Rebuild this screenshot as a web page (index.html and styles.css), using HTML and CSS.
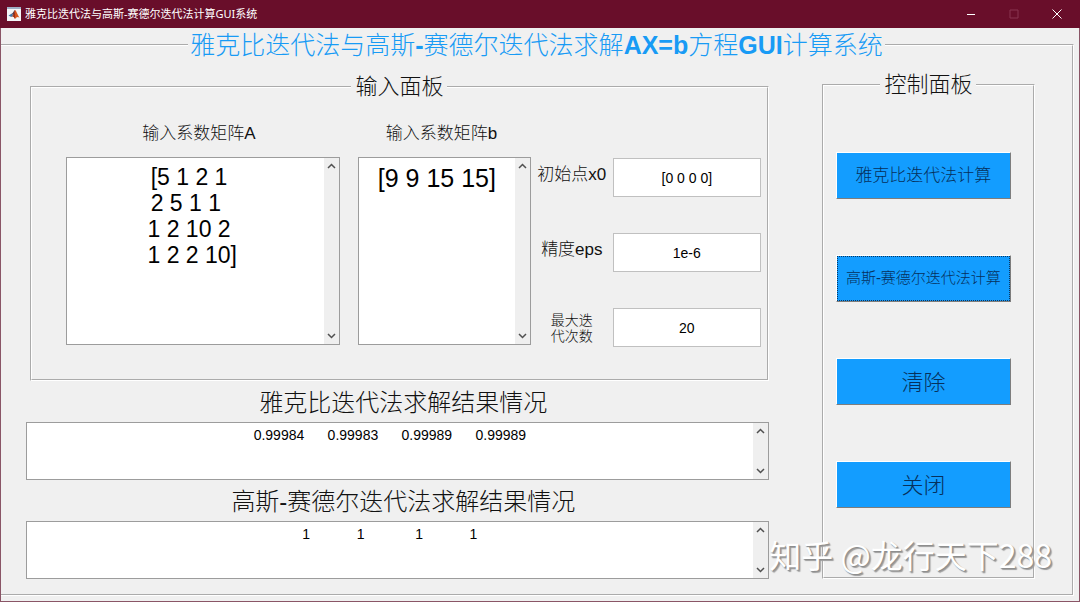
FILE: index.html
```html
<!DOCTYPE html>
<html lang="zh-CN">
<head>
<meta charset="utf-8">
<meta name="viewport" content="width=device-width, initial-scale=1">
<title>雅克比迭代法与高斯-赛德尔迭代法计算GUI系统</title>
<link rel="stylesheet" href="styles.css">
</head>
<body>
<svg class="defs" aria-hidden="true">
  <symbol id="up" viewBox="0 0 9 6"><path d="M1 5 4.500 1.500 8 5" fill="none" stroke="#505050" stroke-width="1.500"/></symbol>
  <symbol id="down" viewBox="0 0 9 6"><path d="M1 1 4.500 4.500 8 1" fill="none" stroke="#505050" stroke-width="1.500"/></symbol>
</svg>
<header class="titlebar">
  <svg class="app-icon" viewBox="0 0 14 14" aria-hidden="true">
    <rect width="14" height="14" fill="#f4f6f8"/>
    <rect width="14" height="2" fill="#9fb0c6"/>
    <path d="M1.500 8.500 4.500 6.800 6 7.700 4.200 10z" fill="#3f78ab"/>
    <path d="M4.500 6.800C6 6.500 6.800 3.500 8 3L7.500 7 5.600 9.500 4.200 10 6 7.700z" fill="#5a3a4a"/>
    <path d="M8 3C9.200 3.200 10.500 8 12.500 10.500 10.500 9.300 9.500 10 8 12 7.500 10.200 6.500 9.300 5.600 9.500 7 8 7.300 5 8 3z" fill="#d8571f"/>
    <path d="M8 3C7.900 6 8.200 9 8 12 7.500 10.200 6.500 9.300 5.600 9.500 7 8 7.300 5 8 3z" fill="#a03018"/>
  </svg>
  <h1 class="caption">雅克比迭代法与高斯-赛德尔迭代法计算GUI系统</h1>
  <div class="window-buttons">
    <button class="win-btn" type="button" aria-label="最小化"><svg viewBox="0 0 10 10"><path d="M1 5.500H9"/></svg></button>
    <button class="win-btn win-off" type="button" aria-label="最大化" disabled><svg viewBox="0 0 10 10"><path d="M1 1H9V9H1z"/></svg></button>
    <button class="win-btn" type="button" aria-label="关闭窗口"><svg viewBox="0 0 10 10"><path d="M.5.5 9.500 9.500M9.500.5.5 9.500"/></svg></button>
  </div>
</header>
<main class="client">
  <fieldset class="frame system">
    <legend class="system-title">雅克比迭代法与高斯<b>-</b>赛德尔迭代法求解<b>AX=b</b>方程<b>GUI</b>计算系统</legend>
    <div class="columns">
      <div class="left">
        <fieldset class="frame input-panel">
          <legend class="panel-title">输入面板</legend>
          <div class="inputs">
            <div class="matrix matrix-a">
              <label class="matrix-label" for="ma">输入系数矩阵A</label>
              <div class="listbox tall">
                <textarea class="text text-a" id="ma" wrap="off">[5 1 2 1  
2 5 1 1   
1 2 10 2  
1 2 2 10] </textarea>
                <div class="scroll"><svg class="arrow"><use href="#up"/></svg><svg class="arrow"><use href="#down"/></svg></div>
              </div>
            </div>
            <div class="matrix matrix-b">
              <label class="matrix-label" for="mb">输入系数矩阵b</label>
              <div class="listbox tall">
                <textarea class="text text-b" id="mb" wrap="off">[9 9 15 15]</textarea>
                <div class="scroll"><svg class="arrow"><use href="#up"/></svg><svg class="arrow"><use href="#down"/></svg></div>
              </div>
            </div>
            <div class="params">
              <label class="param-label" for="x0">初始点x0</label>
              <input class="param-input" id="x0" value="[0 0 0 0]">
              <label class="param-label" for="eps">精度eps</label>
              <input class="param-input" id="eps" value="1e-6">
              <label class="param-label small" for="max">最大迭<br>代次数</label>
              <input class="param-input" id="max" value="20">
            </div>
          </div>
        </fieldset>
        <label class="result-label" for="r1">雅克比迭代法求解结果情况</label>
        <div class="listbox short">
          <textarea class="text text-r" id="r1" wrap="off" readonly>0.99984      0.99983      0.99989      0.99989</textarea>
          <div class="scroll"><svg class="arrow"><use href="#up"/></svg><svg class="arrow"><use href="#down"/></svg></div>
        </div>
        <label class="result-label" for="r2">高斯-赛德尔迭代法求解结果情况</label>
        <div class="listbox short">
          <textarea class="text text-r" id="r2" wrap="off" readonly>1            1             1            1</textarea>
          <div class="scroll"><svg class="arrow"><use href="#up"/></svg><svg class="arrow"><use href="#down"/></svg></div>
        </div>
      </div>
      <fieldset class="frame control-panel">
        <legend class="panel-title">控制面板</legend>
        <div class="actions">
          <button class="action mid" type="button">雅克比迭代法计算</button>
          <button class="action compact focused" type="button">高斯-赛德尔迭代法计算</button>
          <button class="action" type="button">清除</button>
          <button class="action" type="button">关闭</button>
        </div>
      </fieldset>
    </div>
  </fieldset>
  <div class="watermark">知乎 @龙行天下288</div>
</main>
</body>
</html>
```
FILE: styles.css
```css
* { box-sizing: border-box; }

body {
  margin: 0;
  min-height: 100vh;
  display: flex;
  flex-direction: column;
  background: #f0f0f0;
  color: #111;
  font-family: "Liberation Sans", "Noto Sans CJK SC", sans-serif;
  font-weight: 300;
}

button, input, textarea { font: inherit; color: inherit; }

.defs { position: absolute; width: 0; height: 0; }

.titlebar {
  display: flex;
  align-items: center;
  height: 28px;
  padding: 0 2px 0 7px;
  gap: 4px;
  background: #690e2a;
  color: #fff;
}
.app-icon { width: 14px; height: 14px; }
.caption {
  flex: 1;
  margin: 0;
  font: 400 11px/16px "Noto Sans", "Noto Sans CJK SC", sans-serif;
}
.window-buttons { display: flex; }
.win-btn {
  width: 43px;
  height: 27px;
  padding: 0;
  border: 0;
  background: none;
  display: grid;
  place-items: center;
}
.win-btn svg { width: 10px; height: 10px; fill: none; stroke: #fff; stroke-width: 1; }
.win-off svg { stroke: #8a3450; }

.client {
  position: relative;
  flex: 1;
  display: flex;
  border: 1px solid #8a5566;
  border-top: 0;
  padding: 2px 5px 5px 0;
}

.frame { margin: 0; padding: 0; min-width: 0; border: 2px groove #fff; }

.system { flex: 1; border-left: 0; }
.system-title {
  margin: 0 auto;
  padding: 0 2px;
  font-size: 25px;
  line-height: 30px;
  color: #189bf5;
}
.system-title b { font-weight: 700; }
.panel-title {
  margin: 0 auto;
  padding: 0 4px;
  font-size: 22px;
  line-height: 24px;
}

.columns {
  display: grid;
  grid-template-columns: minmax(0, 742fr) minmax(0, 213fr);
  gap: 53px;
  padding: 13px 37px 13px 25px;
}

.left { display: flex; flex-direction: column; padding-top: 2px; }
.input-panel { margin-left: 4px; }
.inputs { display: flex; padding: 25px 6px 32px 34px; }
.matrix { display: flex; flex-direction: column; gap: 13px; min-width: 0; }
.matrix-a { flex: 274; margin-right: 18px; }
.matrix-b { flex: 173; }
.matrix-label { font-size: 17px; line-height: 20px; text-align: center; }
.matrix-a .matrix-label { padding-right: 8px; }
.matrix-b .matrix-label { padding-right: 6px; }

.listbox { display: flex; border: 1px solid #9c9c9c; background: #fff; }
.tall { height: 188px; }
.short { height: 58px; }
.text {
  flex: 1;
  min-width: 0;
  margin: 0;
  border: 0;
  outline: 0;
  resize: none;
  overflow: hidden;
  background: none;
  color: #000;
  text-align: center;
  white-space: pre;
}
.text-a { padding: 6px 0; font-size: 23px; line-height: 26px; }
.text-b { padding: 6px 0; font-size: 25px; line-height: 28px; }
.text-r { padding: 4px 0; font-size: 14px; line-height: 16px; }
.scroll {
  width: 15px;
  display: flex;
  flex-direction: column;
  justify-content: space-between;
  align-items: center;
  padding: 5px 0;
  background: #efefef;
}
.arrow { width: 9px; height: 6px; }

.params {
  flex: 230;
  min-width: 0;
  display: grid;
  grid-template-columns: 82px minmax(0, 1fr);
  grid-auto-rows: 39px;
  row-gap: 36px;
  align-items: center;
  padding-top: 34px;
}
.param-label { font-size: 17px; line-height: 20px; text-align: center; padding-bottom: 6px; }
.small { font-size: 14px; line-height: 16px; padding: 0; }
.param-input {
  width: 100%;
  height: 100%;
  border: 1px solid #c0c0c0;
  background: #fff;
  text-align: center;
  font-size: 14px;
  color: #000;
}

.result-label {
  margin: 6px 0 3px;
  padding-left: 12px;
  font-size: 24px;
  line-height: 32px;
  text-align: center;
}

.actions {
  display: flex;
  flex-direction: column;
  gap: 56px;
  padding: 55px 22px 0 12px;
}
.action {
  height: 47px;
  padding: 0 0 4px;
  border: 1px solid;
  border-color: #fff #7d7d7d #7d7d7d #fff;
  background: #139dff;
  color: #06305c;
  font-size: 22px;
  white-space: nowrap;
}
.mid { font-size: 17px; }
.compact { font-size: 15px; }
.focused { outline: 1px dotted #0a3560; outline-offset: -2px; }

.watermark {
  position: absolute;
  right: 27px;
  bottom: 25px;
  font: 400 32px/44px "Noto Sans CJK SC", sans-serif;
  color: #fff;
  text-shadow: 1px 1px 1px #8c8c8c, 2px 2px 1px #a0a0a0;
  white-space: nowrap;
}
```
